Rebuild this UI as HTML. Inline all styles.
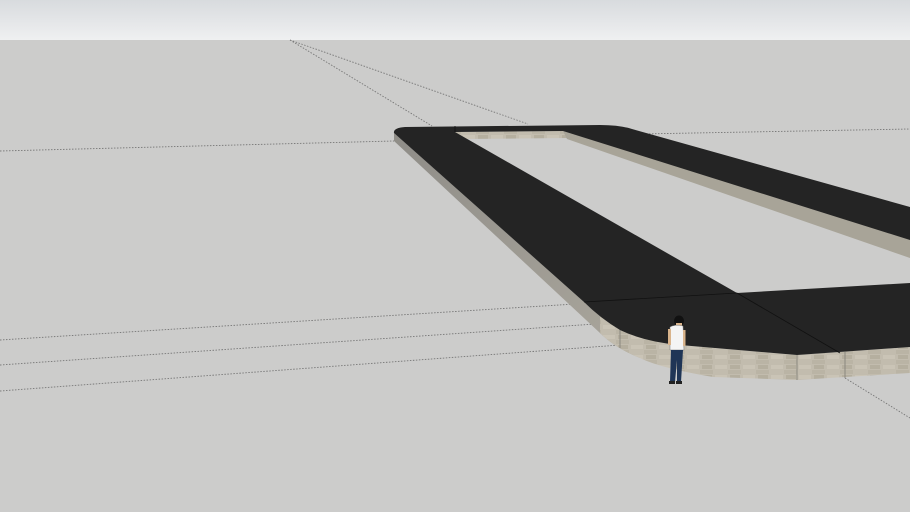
<!DOCTYPE html>
<html><head><meta charset="utf-8"><style>
html,body{margin:0;padding:0;width:910px;height:512px;overflow:hidden;background:#cccccb}
svg{display:block}
</style></head><body>
<svg width="910" height="512" viewBox="0 0 910 512" xmlns="http://www.w3.org/2000/svg">
<defs>
<linearGradient id="sky" x1="0" y1="0" x2="0" y2="1"><stop offset="0" stop-color="#d8dbde"/><stop offset="1" stop-color="#eff0f1"/></linearGradient>
<linearGradient id="wallL" x1="0" y1="0" x2="1" y2="1"><stop offset="0" stop-color="#8f8d88"/><stop offset="1" stop-color="#aaa69c"/></linearGradient>
<pattern id="brick" width="28" height="10" patternUnits="userSpaceOnUse"><rect width="28" height="10" fill="#c2bcae"/><rect x="0" y="0" width="13" height="4" fill="#bab4a5"/><rect x="15" y="5" width="12" height="4" fill="#cac4b6"/><rect x="2" y="5" width="10" height="4" fill="#b5af9f"/></pattern>
</defs>
<rect width="910" height="40" fill="url(#sky)"/>
<rect y="40" width="910" height="472" fill="#cccccb"/>
<g stroke="#777" stroke-width="0.9" stroke-dasharray="1.5,1.5" fill="none">
<line x1="290" y1="40" x2="432" y2="126"/>
<line x1="290" y1="40" x2="528" y2="124"/>
<line x1="0" y1="151" x2="394" y2="141"/>
<line x1="640" y1="134" x2="910" y2="129"/>
<line x1="0" y1="340" x2="575" y2="304"/>
<line x1="0" y1="365" x2="595" y2="324"/>
<line x1="0" y1="391" x2="620" y2="345"/>
<line x1="845" y1="378" x2="910" y2="418"/>
</g>
<polygon points="455,132 563,131 567,138 465,139" fill="url(#brick)"/>
<polygon points="563,131 910,236 910,258 567,139" fill="#a8a498"/>
<path d="M394,133 L584,302 Q600,318 620,330 L640,358 Q615,348 600,333 L394,141 Z" fill="url(#wallL)"/>
<path d="M600,316 Q625,338 680,345 L797,355 L910,347 L910,373 L797,380 L713,377 Q660,368 640,358 Q615,348 600,333 Z" fill="url(#brick)"/>
<line x1="797" y1="355" x2="797" y2="380" stroke="#8a877f" stroke-width="1"/>
<line x1="845" y1="352" x2="845" y2="378" stroke="#8a877f" stroke-width="1"/>
<line x1="620" y1="330" x2="620" y2="348" stroke="#8a877f" stroke-width="1"/>
<path d="M405,127 Q393,128 394,133 L584,302 Q600,318 620,330 Q645,342 680,345 L797,355 L910,347 L910,283 L737,293 L455,132 L563,131 L910,240 L910,207 L632,129 Q620,125 600,125 Z" fill="#242424"/>
<g stroke="#111" stroke-width="0.8" fill="none">
<line x1="584" y1="302" x2="737" y2="293"/>
<line x1="737" y1="293" x2="840" y2="353"/>
<line x1="455" y1="132" x2="455" y2="126"/>
</g>
<ellipse cx="679" cy="321" rx="5" ry="5.5" fill="#111"/>
<rect x="676" y="323" width="6" height="4" fill="#d9b48c"/>
<path d="M670,327 Q675,324 683,326 L684,350 L670,350 Z" fill="#f4f4f4" stroke="#777" stroke-width="0.5"/>
<rect x="668" y="329" width="3" height="16" fill="#d9b48c"/>
<rect x="683" y="330" width="2.5" height="16" fill="#d9b48c"/>
<path d="M671,350 L683,350 L681,382 L677,382 L677,360 L675,382 L670,382 Z" fill="#1f3556"/>
<rect x="669" y="381" width="6" height="3" fill="#222"/>
<rect x="676" y="381" width="6" height="3" fill="#222"/>
</svg>
</body></html>
